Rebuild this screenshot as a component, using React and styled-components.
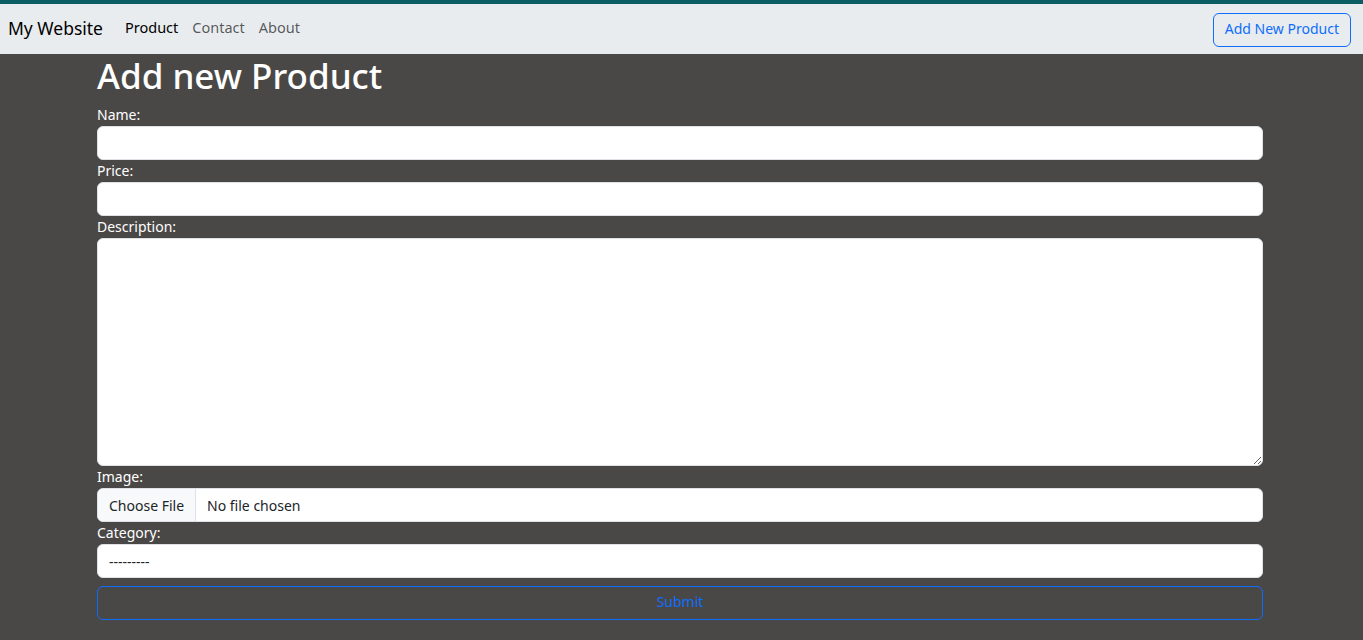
import React from "react";
import styled, { createGlobalStyle } from "styled-components";

const GlobalStyle = createGlobalStyle`
  * {
    box-sizing: border-box;
  }
  body {
    margin: 0;
    background: #4a4846;
    font-family: "Noto Sans", "Open Sans", sans-serif;
    font-size: 14px;
    line-height: 1.5;
    color: #212529;
  }
`;

const App = () => {
  return (
    <>
      <GlobalStyle />
      <Navbar>
        <NavLeft>
          <Brand>My Website</Brand>
          <NavLinks>
            <NavLink active>Product</NavLink>
            <NavLink>Contact</NavLink>
            <NavLink>About</NavLink>
          </NavLinks>
        </NavLeft>
        <OutlineButton>Add New Product</OutlineButton>
      </Navbar>
      <Container>
        <Title>Add new Product</Title>
        <Form onSubmit={e => e.preventDefault()}>
          <Label htmlFor="name">Name:</Label>
          <Input id="name" type="text" />
          <Label htmlFor="price">Price:</Label>
          <Input id="price" type="text" />
          <Label htmlFor="description">Description:</Label>
          <TextArea id="description" />
          <Label>Image:</Label>
          <FileBox>
            <FileButton>Choose File</FileButton>
            <FileName>No file chosen</FileName>
          </FileBox>
          <Label htmlFor="category">Category:</Label>
          <Select id="category" defaultValue="">
            <option value="">---------</option>
          </Select>
          <SubmitButton type="submit">Submit</SubmitButton>
        </Form>
      </Container>
    </>
  );
};

export default App;

const Navbar = styled.nav`
  display: flex;
  align-items: center;
  justify-content: space-between;
  height: 54px;
  padding: 0 12px 0 8px;
  border-top: 4px solid #0b5d63;
  background: #e9ecef;
`;

const NavLeft = styled.div`
  display: flex;
  align-items: center;
  margin-top: -3px;
`;

const Brand = styled.a`
  font-size: 17.5px;
  color: #000;
  margin-right: 15px;
  margin-top: 2px;
`;

const NavLinks = styled.div`
  display: flex;
  align-items: center;
`;

const NavLink = styled.a`
  padding: 0 7px;
  font-size: 14.5px;
  color: ${props => (props.active ? "#000" : "rgba(0, 0, 0, 0.65)")};
`;

const OutlineButton = styled.button`
  font-family: inherit;
  font-size: 14px;
  line-height: 1;
  color: #0d6efd;
  background: transparent;
  border: 1px solid #0d6efd;
  border-radius: 6px;
  height: 34px;
  padding: 0 11px 2px;
  margin-top: 2px;
  cursor: pointer;
`;

const Container = styled.div`
  margin: 0 100px 0 97px;
`;

const Title = styled.h1`
  margin: 0;
  height: 50px;
  font-size: 35px;
  font-weight: 500;
  line-height: 44px;
  color: #fff;
`;

const Form = styled.form`
  display: flex;
  flex-direction: column;
`;

const Label = styled.label`
  display: block;
  height: 22px;
  line-height: 21px;
  font-size: 14px;
  color: #fff;
`;

const fieldBase = `
  width: 100%;
  font-family: inherit;
  font-size: 14px;
  color: #212529;
  background: #fff;
  border: 1px solid #dee2e6;
  border-radius: 6px;
  padding: 6px 11px;
  outline: none;
`;

const Input = styled.input`
  ${fieldBase}
  height: 34px;
`;

const TextArea = styled.textarea`
  ${fieldBase}
  height: 228px;
  display: block;
  resize: vertical;
`;

const FileBox = styled.div`
  display: flex;
  align-items: stretch;
  height: 34px;
  background: #fff;
  border: 1px solid #dee2e6;
  border-radius: 6px;
  overflow: hidden;
`;

const FileButton = styled.span`
  display: flex;
  align-items: center;
  padding: 0 11px;
  background: #f8f9fa;
  border-right: 1px solid #dee2e6;
  color: #212529;
`;

const FileName = styled.span`
  display: flex;
  align-items: center;
  padding: 0 11px;
  color: #212529;
`;

const Select = styled.select`
  ${fieldBase}
  height: 34px;
  appearance: none;
`;

const SubmitButton = styled.button`
  margin-top: 8px;
  height: 34px;
  width: 100%;
  font-family: inherit;
  font-size: 14px;
  line-height: 1;
  padding-bottom: 3px;
  color: #0d6efd;
  background: transparent;
  border: 1px solid #0d6efd;
  border-radius: 6px;
  cursor: pointer;
`;
